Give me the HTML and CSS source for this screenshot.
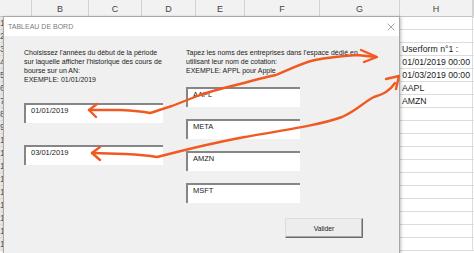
FILE: index.html
```html
<!DOCTYPE html>
<html lang="fr">
<head>
    <meta charset="UTF-8">
    <meta name="viewport" content="width=device-width, initial-scale=1.0">
    <title>Tableau de bord</title>
    <link rel="stylesheet" href="styles.css">
</head>
<body>

    <div class="sheet">
        <div class="col-heads">
            <div></div><div>B</div><div>C</div><div>D</div><div>E</div><div>F</div><div>G</div><div>H</div><div></div>
        </div>
        <div class="row"><div class="rh">1</div><div></div><div></div><div></div><div></div><div></div><div></div><div></div><div></div></div>
        <div class="row"><div class="rh">2</div><div></div><div></div><div></div><div></div><div></div><div></div><div></div><div></div></div>
        <div class="row"><div class="rh">3</div><div></div><div></div><div></div><div></div><div></div><div></div><div>Userform n°1 :</div><div></div></div>
        <div class="row"><div class="rh">4</div><div></div><div></div><div></div><div></div><div></div><div></div><div class="num">01/01/2019 00:00</div><div></div></div>
        <div class="row"><div class="rh">5</div><div></div><div></div><div></div><div></div><div></div><div></div><div class="num">01/03/2019 00:00</div><div></div></div>
        <div class="row"><div class="rh">6</div><div></div><div></div><div></div><div></div><div></div><div></div><div>AAPL</div><div></div></div>
        <div class="row"><div class="rh">7</div><div></div><div></div><div></div><div></div><div></div><div></div><div>AMZN</div><div></div></div>
        <div class="row"><div class="rh">8</div><div></div><div></div><div></div><div></div><div></div><div></div><div></div><div></div></div>
        <div class="row"><div class="rh">9</div><div></div><div></div><div></div><div></div><div></div><div></div><div></div><div></div></div>
        <div class="row"><div class="rh">10</div><div></div><div></div><div></div><div></div><div></div><div></div><div></div><div></div></div>
        <div class="row"><div class="rh">11</div><div></div><div></div><div></div><div></div><div></div><div></div><div></div><div></div></div>
        <div class="row"><div class="rh">12</div><div></div><div></div><div></div><div></div><div></div><div></div><div></div><div></div></div>
        <div class="row"><div class="rh">13</div><div></div><div></div><div></div><div></div><div></div><div></div><div></div><div></div></div>
        <div class="row"><div class="rh">14</div><div></div><div></div><div></div><div></div><div></div><div></div><div></div><div></div></div>
        <div class="row"><div class="rh">15</div><div></div><div></div><div></div><div></div><div></div><div></div><div></div><div></div></div>
        <div class="row"><div class="rh">16</div><div></div><div></div><div></div><div></div><div></div><div></div><div></div><div></div></div>
        <div class="row"><div class="rh">17</div><div></div><div></div><div></div><div></div><div></div><div></div><div></div><div></div></div>
        <div class="row"><div class="rh">18</div><div></div><div></div><div></div><div></div><div></div><div></div><div></div><div></div></div>
    </div>

    <div class="dialog">
        <div class="titlebar">
            <span class="title">TABLEAU DE BORD</span>
            <svg class="close" width="8" height="8" viewBox="0 0 8 8">
                <path d="M0.5 0.5 L7.5 7.5 M7.5 0.5 L0.5 7.5" stroke="#9a9a9a" stroke-width="0.9" fill="none"/>
            </svg>
        </div>
        <div class="form">
            <div class="col-left">
                <div class="note">
                    <div>Choisissez l'années du début de la période</div>
                    <div>sur laquelle afficher l'historique des cours de</div>
                    <div>bourse sur un AN:</div>
                    <div>EXEMPLE: 01/01/2019</div>
                </div>
                <div class="field wide first">01/01/2019</div>
                <div class="field wide second">03/01/2019</div>
            </div>
            <div class="col-right">
                <div class="note">
                    <div>Tapez les noms des entreprises dans l'espace dédié en</div>
                    <div>utilisant leur nom de cotation:</div>
                    <div>EXEMPLE: APPL pour Apple</div>
                </div>
                <div class="tickers">
                    <div class="field">AAPL</div>
                    <div class="field">META</div>
                    <div class="field">AMZN</div>
                    <div class="field">MSFT</div>
                </div>
                <button class="btn">Valider</button>
            </div>
        </div>
    </div>

    <!-- fleches dessinees a la main par dessus la capture -->
    <svg class="arrows" width="474" height="253" viewBox="0 0 474 253">
        <g stroke="#f05a22" stroke-width="2.4" fill="none" stroke-linecap="round" stroke-linejoin="round">
            <path d="M89 110 L120 110 Q140 111 150 113 C160 110 168 107 172 106 C185 101 192 98 200 95 C215 90 228 87 240 84 C255 80 265 77 276 75 C290 69 302 63 315 60 C330 57 343 56 357 55 L376 57"/>
            <path d="M97 104 L89 110 L96 117"/>
            <path d="M361 50 L377 57 L364 62"/>
            <path d="M92 153 L125 154 Q145 155 157 157 C185 150 215 142 245 137 C285 130 320 125 342 117 C356 111 364 102 374 97 C383 94 389 92 395 83"/>
            <path d="M100 147 L92 153 L100 160"/>
            <path d="M386 79 L399 76 L396 89"/>
        </g>
    </svg>

</body>
</html>
```

FILE: styles.css
```css
* {
    box-sizing: border-box;
}
body {
    margin: 0;
    width: 474px;
    height: 253px;
    overflow: hidden;
    position: relative;
    background: #fff;
    font-family: "Liberation Sans", Arial, sans-serif;
}

/* feuille excel derriere */
.col-heads, .row {
    display: grid;
    grid-template-columns: 32px 57px 53px 54px 49px 75px 80px 73px 1fr;
}
.col-heads {
    height: 17px;
    background: #f2f2f2;
    border-bottom: 1px solid #c4c4c4;
}
.col-heads div {
    border-right: 1px solid #d2d2d2;
    text-align: center;
    font-size: 9px;
    line-height: 18px;
    color: #444;
}
.row {
    height: 13px;
}
.row div {
    border-right: 1px solid #dcdcdc;
    border-bottom: 1px solid #dcdcdc;
    padding: 0 2px;
    font-size: 8.7px;
    line-height: 13px;
    color: #1b1b1b;
    white-space: nowrap;
    overflow: hidden;
}
.row .rh {
    background: #e8e8e8;
    color: #555;
    padding: 0;
    font-size: 9px;
}
.row .num {
    text-align: right;
    padding-right: 2px;
}

/* userform */
.dialog {
    position: absolute;
    left: 3px;
    top: 16px;
    width: 397px;
    height: 240px;
    background: #f0f0f0;
    border: 1px solid #a8a8a8;
    box-shadow: 1px 1px 3px rgba(0, 0, 0, 0.25);
}
.titlebar {
    height: 19px;
    background: #fff;
    display: flex;
    align-items: center;
    justify-content: space-between;
    padding: 0 4px 0 4px;
}
.title {
    font-size: 7px;
    color: #7c7c7c;
}
.form {
    display: grid;
    grid-template-columns: 139px 177px;
    column-gap: 23px;
    padding: 12px 0 0 20px;
}
.note {
    font-size: 7px;
    line-height: 9px;
    color: #222;
    white-space: nowrap;
}
.field {
    height: 20px;
    background: #fff;
    border-top: 2px solid #868686;
    border-left: 2px solid #868686;
    padding: 1px 5px;
    font-size: 7.5px;
    line-height: 9px;
    color: #222;
}
.wide {
    width: 139px;
}
.first {
    margin-top: 19px;
}
.second {
    margin-top: 22px;
}
.col-right {
    display: flex;
    flex-direction: column;
}
.tickers {
    display: flex;
    flex-direction: column;
    gap: 12px;
    margin-top: 12px;
    width: 114px;
}
.btn {
    align-self: flex-end;
    width: 78px;
    height: 20px;
    margin-top: 15px;
    padding: 0;
    background: #ededed;
    border: 1px solid;
    border-color: #dcdcdc #6c6c6c #6c6c6c #dcdcdc;
    box-shadow: inset -1px -1px 0 #a8a8a8;
    font-family: "Liberation Sans", Arial, sans-serif;
    font-size: 6.8px;
    color: #222;
}
.arrows {
    position: absolute;
    left: 0;
    top: 0;
    pointer-events: none;
}
```
